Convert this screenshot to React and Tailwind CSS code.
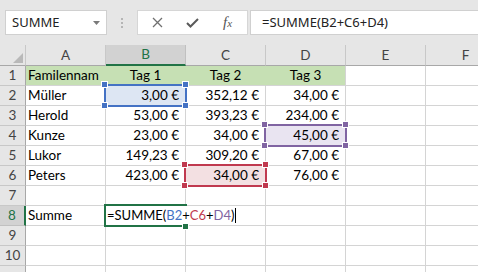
import React from 'react';

const COLS = ['A', 'B', 'C', 'D', 'E', 'F'];
const DATA = [
  ['Familennam', 'Tag 1', 'Tag 2', 'Tag 3'],
  ['Müller', '3,00 €', '352,12 €', '34,00 €'],
  ['Herold', '53,00 €', '393,23 €', '234,00 €'],
  ['Kunze', '23,00 €', '34,00 €', '45,00 €'],
  ['Lukor', '149,23 €', '309,20 €', '67,00 €'],
  ['Peters', '423,00 €', '34,00 €', '76,00 €'],
  [],
  ['Summe'],
  [],
  [],
  [],
];

const FILL = {
  '1-0': 'bg-[#c6e0b4] border-r-[#c6e0b4]',
  '1-1': 'bg-[#c6e0b4] border-r-[#c6e0b4]',
  '1-2': 'bg-[#c6e0b4] border-r-[#c6e0b4]',
  '1-3': 'bg-[#c6e0b4] border-r-[#d4d4d4]',
  '2-1': 'bg-[#dde6f3] border-r-[#d4d4d4]',
  '6-2': 'bg-[#f3e0e2] border-r-[#d4d4d4]',
  '4-3': 'bg-[#e9e4f1] border-r-[#d4d4d4]',
};

function Cell({ r, c, v }) {
  const fill = FILL[`${r}-${c}`] || 'bg-white border-r-[#d4d4d4]';
  let align = 'justify-end pr-[6px]';
  if (c === 0) align = 'justify-start pl-[2px]';
  else if (r === 1) align = 'justify-center';
  return (
    <div
      className={`w-[80px] shrink-0 h-full flex items-center overflow-hidden whitespace-nowrap border-r border-b border-b-[#d4d4d4] text-[13.5px] text-black ${fill} ${align}`}
    >
      {v}
    </div>
  );
}

function Row({ r, cells }) {
  const sel = r === 8;
  const label = r <= 10 ? r : '';
  return (
    <div className="flex h-[20px]">
      {sel ? (
        <div className="w-[26px] shrink-0 h-full flex items-center justify-center bg-[#d2d2d2] text-[#217346] text-[13.5px] border-b border-b-[#c0c0c0] border-r-2 border-r-[#217346]">
          {label}
        </div>
      ) : (
        <div className="w-[26px] shrink-0 h-full flex items-center justify-center bg-[#e6e6e6] text-[#444] text-[13.5px] border-b border-b-[#c8c8c8] border-r border-r-[#a8a8a8]">
          {label}
        </div>
      )}
      {COLS.map((c, i) => (
        <Cell key={c} r={r} c={i} v={cells[i] || ''} />
      ))}
    </div>
  );
}

function Sq({ pos, color }) {
  return <div className={`absolute w-[5px] h-[5px] ring-1 ring-white ${color} ${pos}`} />;
}

export default function App() {
  return (
    <div className="relative w-[478px] h-[272px] overflow-hidden bg-white font-['Lato',sans-serif]">
      {/* toolbar */}
      <div className="h-[45px] bg-[#e6e6e6] flex items-start pt-[10px]">
        <div className="ml-[5px] w-[102px] h-[25px] shrink-0 bg-white border border-[#d0d0d0] flex items-center">
          <span className="flex-1 pl-[6px] font-['Noto_Sans',sans-serif] text-[13px] text-[#222]">SUMME</span>
          <span className="w-[20px] flex justify-center">
            <svg width="7" height="4" viewBox="0 0 7 4">
              <polygon points="0,0 7,0 3.5,4" fill="#7a7a7a" />
            </svg>
          </span>
        </div>
        <div className="w-[30px] h-[25px] shrink-0 flex flex-col items-center justify-center gap-[2px]">
          <div className="w-[2px] h-[2px] bg-[#b5b5b5]" />
          <div className="w-[2px] h-[2px] bg-[#b5b5b5]" />
          <div className="w-[2px] h-[2px] bg-[#b5b5b5]" />
        </div>
        <div className="w-[111px] h-[25px] shrink-0 bg-white border border-[#d6d6d6] flex items-center px-[2px]">
          <div className="w-[35px] flex justify-center">
            <svg width="11" height="11" viewBox="0 0 11 11">
              <path d="M1 1 L10 10 M10 1 L1 10" stroke="#707070" strokeWidth="1.3" />
            </svg>
          </div>
          <div className="w-[35px] flex justify-center">
            <svg width="13" height="10" viewBox="0 0 13 10">
              <path d="M1 5 L4.5 8.5 L12 1" stroke="#5a5a5a" strokeWidth="2" fill="none" />
            </svg>
          </div>
          <div className="w-[35px] flex justify-center items-baseline font-['Liberation_Serif',serif] italic text-[#555]">
            <span className="text-[15px]">f</span>
            <span className="text-[11px]">x</span>
          </div>
        </div>
        <div className="ml-[2px] flex-1 h-[25px] bg-white border border-[#d0d0d0] border-r-0 flex items-center pl-[11px] font-['Noto_Sans',sans-serif] text-[13px] text-[#222]">
          =SUMME(B2+C6+D4)
        </div>
      </div>

      {/* column header row */}
      <div className="flex h-[21px]">
        <div className="w-[26px] shrink-0 h-full bg-[#e6e6e6] border-r border-b border-r-[#c8c8c8] border-b-[#a8a8a8] flex items-end justify-end pr-[2px] pb-[2px]">
          <svg width="10" height="10" viewBox="0 0 10 10">
            <polygon points="10,0 10,10 0,10" fill="#b9b9b9" />
          </svg>
        </div>
        {COLS.map((c) =>
          c === 'B' ? (
            <div
              key={c}
              className="w-[80px] shrink-0 h-full flex items-center justify-center bg-[#d2d2d2] text-[#217346] text-[13.5px] border-r border-r-[#c0c0c0] border-b-2 border-b-[#217346]"
            >
              {c}
            </div>
          ) : (
            <div
              key={c}
              className="w-[80px] shrink-0 h-full flex items-center justify-center bg-[#e6e6e6] text-[#444] text-[13.5px] border-r border-r-[#c8c8c8] border-b border-b-[#a8a8a8]"
            >
              {c}
            </div>
          )
        )}
      </div>

      {/* rows */}
      {DATA.map((cells, i) => (
        <Row key={i} r={i + 1} cells={cells} />
      ))}

      {/* B2 range (blue) */}
      <div className="absolute left-[104px] top-[84px] w-[83px] h-[23px] border-2 border-[#4472c4]" />
      <Sq pos="left-[102px] top-[82px]" color="bg-[#4472c4]" />
      <Sq pos="left-[183px] top-[82px]" color="bg-[#4472c4]" />
      <Sq pos="left-[102px] top-[103px]" color="bg-[#4472c4]" />
      <Sq pos="left-[183px] top-[103px]" color="bg-[#4472c4]" />

      {/* D4 range (purple) */}
      <div className="absolute left-[264px] top-[124px] w-[83px] h-[23px] border-2 border-[#8064a2]" />
      <Sq pos="left-[262px] top-[122px]" color="bg-[#8064a2]" />
      <Sq pos="left-[343px] top-[122px]" color="bg-[#8064a2]" />
      <Sq pos="left-[262px] top-[143px]" color="bg-[#8064a2]" />
      <Sq pos="left-[343px] top-[143px]" color="bg-[#8064a2]" />

      {/* C6 range (red) */}
      <div className="absolute left-[184px] top-[164px] w-[83px] h-[23px] border-2 border-[#c0394f]" />
      <Sq pos="left-[182px] top-[162px]" color="bg-[#c0394f]" />
      <Sq pos="left-[263px] top-[162px]" color="bg-[#c0394f]" />
      <Sq pos="left-[182px] top-[183px]" color="bg-[#c0394f]" />
      <Sq pos="left-[263px] top-[183px]" color="bg-[#c0394f]" />

      {/* B8 editing */}
      <div className="absolute left-[106px] top-[206px] w-[130px] h-[19px] bg-white flex items-center pl-[1px] text-[13px] text-black whitespace-nowrap">
        <span>=SUMME(</span>
        <span className="text-[#4472c4]">B2</span>
        <span>+</span>
        <span className="text-[#c0394f]">C6</span>
        <span>+</span>
        <span className="text-[#8064a2]">D4</span>
        <span>)</span>
        <span className="ml-[1px] w-[1px] h-[15px] bg-black" />
      </div>
      <div className="absolute left-[104px] top-[204px] w-[83px] h-[23px] border-t-2 border-l-2 border-b-2 border-[#217346]" />
      <div className="absolute left-[183px] top-[224px] w-[5px] h-[5px] bg-[#217346] ring-1 ring-white" />
    </div>
  );
}
